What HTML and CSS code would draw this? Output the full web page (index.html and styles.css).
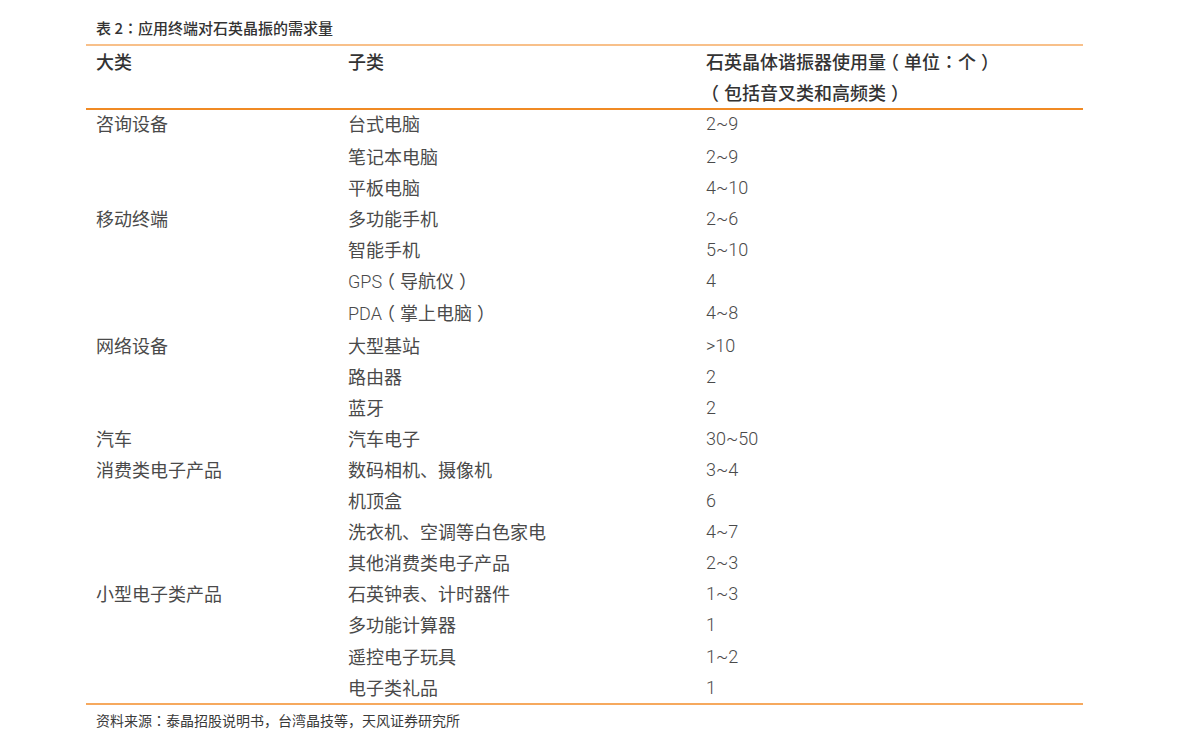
FILE: index.html
```html
<!DOCTYPE html>
<html lang="zh-Hans">
<head>
<meta charset="utf-8">
<link rel="stylesheet" href="styles.css">
</head>
<body>
<div class="page">
  <div class="title">表 2<span class="co" lang="zh-Hant">：</span>应用终端对石英晶振的需求量</div>
  <table class="tbl">
    <colgroup><col class="c1"><col class="c2"><col class="c3"></colgroup>
    <thead>
      <tr><th>大类</th><th>子类</th><th>石英晶体谐振器使用量<span class="po">（</span>单位<span class="co" lang="zh-Hant">：</span>个<span class="pc">）</span><br><span class="po">（</span>包括音叉类和高频类<span class="pc">）</span></th></tr>
    </thead>
    <tbody>
      <tr><td rowspan="3">咨询设备</td><td>台式电脑</td><td class="num">2~9</td></tr>
      <tr><td>笔记本电脑</td><td class="num">2~9</td></tr>
      <tr><td>平板电脑</td><td class="num">4~10</td></tr>
      <tr><td rowspan="4">移动终端</td><td>多功能手机</td><td class="num">2~6</td></tr>
      <tr><td>智能手机</td><td class="num">5~10</td></tr>
      <tr><td><span class="lat">GPS</span><span class="po">（</span>导航仪<span class="pc">）</span></td><td class="num">4</td></tr>
      <tr><td><span class="lat">PDA</span><span class="po">（</span>掌上电脑<span class="pc">）</span></td><td class="num">4~8</td></tr>
      <tr><td rowspan="3">网络设备</td><td>大型基站</td><td class="num">&gt;10</td></tr>
      <tr><td>路由器</td><td class="num">2</td></tr>
      <tr><td>蓝牙</td><td class="num">2</td></tr>
      <tr><td>汽车</td><td>汽车电子</td><td class="num">30~50</td></tr>
      <tr><td rowspan="4">消费类电子产品</td><td>数码相机、摄像机</td><td class="num">3~4</td></tr>
      <tr><td>机顶盒</td><td class="num">6</td></tr>
      <tr><td>洗衣机、空调等白色家电</td><td class="num">4~7</td></tr>
      <tr><td>其他消费类电子产品</td><td class="num">2~3</td></tr>
      <tr><td rowspan="4">小型电子类产品</td><td>石英钟表、计时器件</td><td class="num">1~3</td></tr>
      <tr><td>多功能计算器</td><td class="num">1</td></tr>
      <tr><td>遥控电子玩具</td><td class="num">1~2</td></tr>
      <tr><td>电子类礼品</td><td class="num">1</td></tr>
    </tbody>
  </table>
  <div class="note">资料来源<span class="co" lang="zh-Hant">：</span>泰晶招股说明书，台湾晶技等，天风证券研究所</div>
</div>
</body>
</html>
```
FILE: styles.css
```css
html, body {
  margin: 0;
  padding: 0;
  background: #fff;
}
body {
  font-family: "Noto Sans CJK SC", "Noto Sans", sans-serif;
  color: #4a4a4a;
  text-spacing-trim: space-all;
}
.page {
  width: 997px;
  margin-left: 86px;
  padding-top: 16px;
}
.title {
  padding-left: 10px;
  font-size: 15px;
  font-weight: 500;
  line-height: 24px;
  color: #333;
  border-bottom: 2px solid #f8c08a;
  box-sizing: border-box;
  height: 30px;
}
.tbl {
  width: 997px;
  border-collapse: collapse;
  table-layout: fixed;
  font-size: 18px;
}
.c1 { width: 252px; }
.c2 { width: 358px; }
.c3 { width: 387px; }
.tbl th, .tbl td {
  padding: 0 0 0 10px;
  text-align: left;
  vertical-align: top;
  white-space: nowrap;
}
.tbl th {
  font-weight: 500;
  color: #333;
  line-height: 31px;
}
.tbl thead tr {
  border-bottom: 2px solid #f08a24;
}
.tbl tbody td {
  font-weight: 400;
  color: #4a4a4a;
  line-height: 31.1px;
}
.tbl tbody tr:first-child td {
  line-height: 27px;
  padding-bottom: 4px;
}
.tbl td.num, .lat {
  font-family: "Roboto", "Noto Sans CJK SC", sans-serif;
  font-weight: 300;
}
.co {
  font-family: "Noto Sans CJK TC", "Noto Sans CJK SC", sans-serif;
}
.po {
  margin-left: -0.28em;
  padding-right: 0.28em;
}
.pc {
  padding-left: 0.28em;
  margin-right: -0.28em;
}
.tbl tbody tr:last-child {
  border-bottom: 2px solid #f6a95e;
}
.note {
  padding-left: 10px;
  font-size: 14px;
  line-height: 30px;
  color: #3a3a3a;
}
```
